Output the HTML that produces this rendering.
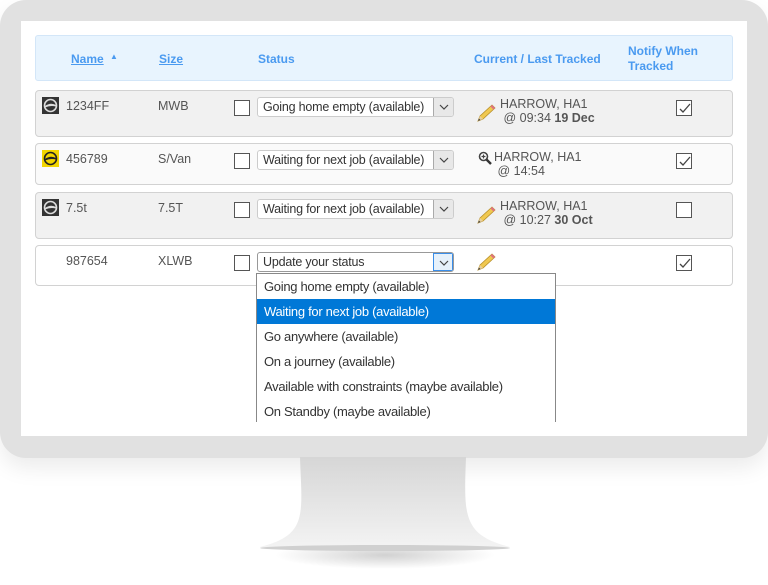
<!DOCTYPE html>
<html><head><style>
*{margin:0;padding:0;box-sizing:border-box}
body{width:768px;height:585px;background:#fff;position:relative;overflow:hidden;font-family:"Liberation Sans",sans-serif;font-size:12.5px;color:#555}
.mon{position:absolute;left:0;top:0;width:768px;height:458px;background:#e1e1e1;border-radius:26px;box-shadow:0 10px 22px rgba(0,0,0,.08)}
.scr{position:absolute;left:21px;top:21px;width:726px;height:415px;background:#fff;overflow:hidden}
.a{position:absolute}
.hdr{left:14px;top:14px;width:698px;height:46px;background:#e8f4fe;border:1px solid #d3e6f8;border-radius:3px}
.h{position:absolute;color:#4a9af0;font-weight:bold;font-size:12px}
.u{text-decoration:underline}
.row{position:absolute;left:14px;width:698px;border:1px solid #d2d2d2;border-radius:4px}
.t{position:absolute;top:8px;font-size:12.5px;color:#555}
.cb{position:absolute;left:198px;top:9px;width:16px;height:16px;border:1px solid #555;background:#fff}
.sel{position:absolute;left:221px;top:6px;width:197px;height:20px;border:1px solid #ccc;border-radius:3px;background:#fff;font-size:12.5px;color:#333;padding:2px 0 0 5px;white-space:nowrap;overflow:hidden;letter-spacing:-.2px}
.sel .ar{position:absolute;right:0;top:0;width:20px;height:18px;background:#e8e8e8;border-left:1px solid #aaa}
.sel .ar svg{position:absolute;left:5px;top:6px}
.ico{position:absolute;left:6px;top:6px}
.loc{position:absolute;left:464px;top:6px;font-size:12.5px;color:#555;line-height:14px}
.nc{position:absolute;left:640px;top:9px;width:16px;height:16px;border:1px solid #555;background:#fff}
.dd{left:235px;top:252px;width:300px;height:149px;border:1px solid #888;border-bottom:none;background:#fff;font-size:13px;color:#333;letter-spacing:-.3px;overflow:hidden}
.dd div{height:25px;padding:5px 0 0 7px}
.pen{position:absolute;left:440px}
</style></head><body>
<div class="mon"></div>
<svg class="a" style="left:250px;top:455px" width="270" height="115" viewBox="0 0 270 115">
<defs><linearGradient id="g" x1="0" y1="0" x2="0" y2="1"><stop offset="0" stop-color="#d6d6d6"/><stop offset="1" stop-color="#f3f3f3"/></linearGradient>
<radialGradient id="s" cx=".5" cy=".5" r=".5"><stop offset="0" stop-color="rgba(0,0,0,.18)"/><stop offset="1" stop-color="rgba(0,0,0,0)"/></radialGradient></defs>
<ellipse cx="135" cy="100" rx="110" ry="14" fill="url(#s)"/>
<path d="M50 2 L216 2 C214 60 212 80 260 92 L10 92 C58 80 52 60 50 2Z" fill="url(#g)"/>
<ellipse cx="135" cy="93" rx="125" ry="3" fill="#d0d0d0"/>
</svg>
<svg width="0" height="0" style="position:absolute"><defs>
<symbol id="pen" viewBox="0 0 20 20"><path d="M2 18 L4 13 L16 2 L19 5 L7 16 Z" fill="#f0c850" stroke="#b8902a" stroke-width=".8"/><path d="M16 2 L19 5 L17.5 6.5 L14.5 3.5Z" fill="#e07080"/><path d="M2 18 L4 13 L7 16Z" fill="#e8d0a0"/><path d="M2 18 L3 15.5 L4.5 17Z" fill="#444"/></symbol>
<symbol id="chev" viewBox="0 0 10 6"><path d="M1 1 L5 5 L9 1" fill="none" stroke="#444" stroke-width="1.2"/></symbol>
<symbol id="lg" viewBox="0 0 17 17"><circle cx="8.5" cy="8.5" r="6" fill="none" stroke="currentColor" stroke-width="1.6"/><path d="M3 9 Q8.5 5 14 8 L14 9.5 Q8.5 8 3 10.5Z" fill="currentColor"/></symbol>
</defs></svg>
<div class="scr">
<div class="a hdr">
<span class="h u" style="left:35px;top:16px">Name</span><span class="h" style="left:74px;top:16px;font-size:8px">▲</span>
<span class="h u" style="left:123px;top:16px">Size</span>
<span class="h" style="left:222px;top:16px">Status</span>
<span class="h" style="left:438px;top:16px">Current / Last Tracked</span>
<span class="h" style="left:592px;top:8px;line-height:15px">Notify When<br>Tracked</span>
</div>
<div class="row" style="top:69px;height:47px;background:#f1f1f1">
<svg class="ico" width="17" height="17" style="background:#333;color:#ddd"><use href="#lg"/></svg><span class="t" style="left:30px">1234FF</span><span class="t" style="left:122px">MWB</span>
<div class="cb"></div><div class="sel">Going home empty (available)<span class="ar"><svg width="10" height="6"><use href="#chev"/></svg></span></div>
<svg class="pen" style="top:12px" width="20" height="20"><use href="#pen"/></svg>
<div class="loc">HARROW, HA1<br>&nbsp;@ 09:34 <b>19 Dec</b></div>
<svg class="nc" width="16" height="16"><path d="M3 8 L6 11 L13 3" fill="none" stroke="#444" stroke-width="1.3"/></svg></div>
<div class="row" style="top:122px;height:42px;background:#fafafa">
<svg class="ico" width="17" height="17" style="background:#f2d500;color:#222"><use href="#lg"/></svg><span class="t" style="left:30px">456789</span><span class="t" style="left:122px">S/Van</span>
<div class="cb"></div><div class="sel">Waiting for next job (available)<span class="ar"><svg width="10" height="6"><use href="#chev"/></svg></span></div>
<svg class="a" style="left:442px;top:7px" width="14" height="14"><circle cx="5.5" cy="5.5" r="4" fill="#fff" stroke="#444" stroke-width="1.6"/><path d="M3.5 5.5h4M5.5 3.5v4" stroke="#444" stroke-width="1.2"/><path d="M8.5 8.5 L13 13" stroke="#333" stroke-width="2.4"/></svg>
<div class="loc" style="left:458px">HARROW, HA1<br>&nbsp;@ 14:54</div>
<svg class="nc" width="16" height="16"><path d="M3 8 L6 11 L13 3" fill="none" stroke="#444" stroke-width="1.3"/></svg></div>
<div class="row" style="top:171px;height:47px;background:#f1f1f1">
<svg class="ico" width="17" height="17" style="background:#333;color:#ddd"><use href="#lg"/></svg><span class="t" style="left:30px">7.5t</span><span class="t" style="left:122px">7.5T</span>
<div class="cb"></div><div class="sel">Waiting for next job (available)<span class="ar"><svg width="10" height="6"><use href="#chev"/></svg></span></div>
<svg class="pen" style="top:12px" width="20" height="20"><use href="#pen"/></svg>
<div class="loc">HARROW, HA1<br>&nbsp;@ 10:27 <b>30 Oct</b></div><div class="nc"></div></div>
<div class="row" style="top:224px;height:41px;background:#fff">
<span class="t" style="left:30px">987654</span><span class="t" style="left:122px">XLWB</span>
<div class="cb"></div><div class="sel" style="border-color:#999">Update your status<span class="ar" style="background:#e6f1fb;border:1px solid #3b8ee8"><svg width="10" height="6"><use href="#chev"/></svg></span></div>
<svg class="pen" style="top:6px" width="20" height="20"><use href="#pen"/></svg>
<svg class="nc" width="16" height="16"><path d="M3 8 L6 11 L13 3" fill="none" stroke="#444" stroke-width="1.3"/></svg></div>
<div class="a dd">
<div>Going home empty (available)</div>
<div style="background:#0078d7;color:#fff">Waiting for next job (available)</div>
<div>Go anywhere (available)</div>
<div>On a journey (available)</div>
<div>Available with constraints (maybe available)</div>
<div>On Standby (maybe available)</div>
</div>
</div>
</body></html>
